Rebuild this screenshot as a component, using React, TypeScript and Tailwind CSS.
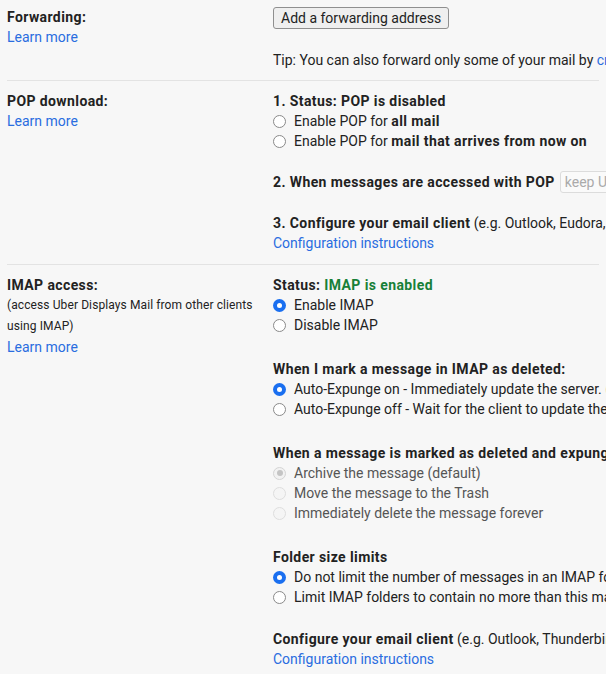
import React from "react";

const font = { fontFamily: "Roboto, 'Liberation Sans', sans-serif" };

function Radio({ checked = false, disabled = false }: { checked?: boolean; disabled?: boolean }) {
  if (checked && !disabled) {
    return (
      <span className="mr-[8px] inline-flex h-[13px] w-[13px] shrink-0 items-center justify-center rounded-full bg-[#1a6ff0]">
        <span className="h-[5px] w-[5px] rounded-full bg-white" />
      </span>
    );
  }
  if (checked && disabled) {
    return (
      <span className="mr-[8px] inline-flex h-[13px] w-[13px] shrink-0 items-center justify-center rounded-full border border-[#d4d4d4] bg-[#f2f2f2]">
        <span className="h-[6px] w-[6px] rounded-full bg-[#c4c4c4]" />
      </span>
    );
  }
  if (disabled) {
    return <span className="mr-[8px] inline-block h-[13px] w-[13px] shrink-0 rounded-full border border-[#dedede] bg-[#f5f5f5]" />;
  }
  return <span className="mr-[8px] inline-block h-[13px] w-[13px] shrink-0 rounded-full border border-[#8a8a8a] bg-white" />;
}

function Opt({ children, checked, disabled }: { children: React.ReactNode; checked?: boolean; disabled?: boolean }) {
  return (
    <div className={"flex h-[20px] items-center " + (disabled ? "text-[#555]" : "")}>
      <Radio checked={checked} disabled={disabled} />
      <span>{children}</span>
    </div>
  );
}

function B({ children }: { children: React.ReactNode }) {
  return <b className="font-bold tracking-[0.4px]">{children}</b>;
}

const link = "text-[#2a6de0]";
const bold = "font-bold tracking-[0.4px]";

export default function App() {
  return (
    <div className="min-h-[674px] w-[606px] overflow-hidden bg-[#f7f7f7] text-[14px] leading-[20px] text-[#222]" style={font}>
      {/* Forwarding */}
      <div className="mx-[7px] grid grid-cols-[266px_1fr] border-b border-[#e3e3e3] pt-[7px] pb-[10px]">
        <div>
          <div className={bold}>Forwarding:</div>
          <div className={link}>Learn more</div>
        </div>
        <div className="whitespace-nowrap">
          <button className="h-[22px] rounded-[3px] border border-[#8f8f8f] bg-[#efefef] px-[7px] text-[14px] leading-[20px] text-[#222]">
            Add a forwarding address
          </button>
          <div className="mt-[21px]">
            Tip: You can also forward only some of your mail by <span className={link}>creating a filter!</span>
          </div>
        </div>
      </div>

      {/* POP */}
      <div className="mx-[7px] grid grid-cols-[266px_1fr] border-b border-[#e3e3e3] pt-[10px] pb-[11px]">
        <div>
          <div className={bold}>POP download:</div>
          <div className={link}>Learn more</div>
        </div>
        <div className="whitespace-nowrap">
          <div className={bold}>1. Status: POP is disabled</div>
          <Opt>
            Enable POP for <B>all mail</B>
          </Opt>
          <Opt>
            Enable POP for <B>mail that arrives from now on</B>
          </Opt>
          <div className="mt-[21px] flex h-[20px] items-center">
            <B>2. When messages are accessed with POP</B>
            <span className="ml-[5px] inline-flex h-[22px] items-center rounded-[3px] border border-[#dcdcdc] bg-[#fafafa] px-[4px] text-[#aaa]">
              keep Uber Displays Mail's copy in the Inbox
            </span>
          </div>
          <div className="mt-[21px]">
            <B>3. Configure your email client</B> (e.g. Outlook, Eudora, Netscape Mail)
          </div>
          <div className={link}>Configuration instructions</div>
        </div>
      </div>

      {/* IMAP */}
      <div className="mx-[7px] grid grid-cols-[266px_1fr] pt-[10px] pb-[10px]">
        <div>
          <div className={bold}>IMAP access:</div>
          <div className="text-[12px] leading-[21px] tracking-[0.1px]">
            (access Uber Displays Mail from other clients using IMAP)
          </div>
          <div className={link}>Learn more</div>
        </div>
        <div className="whitespace-nowrap">
          <div className={bold}>
            Status: <span className="text-[#188038]">IMAP is enabled</span>
          </div>
          <Opt checked>Enable IMAP</Opt>
          <Opt>Disable IMAP</Opt>

          <div className={"mt-[24px] " + bold}>When I mark a message in IMAP as deleted:</div>
          <Opt checked>Auto-Expunge on - Immediately update the server. (default)</Opt>
          <Opt>Auto-Expunge off - Wait for the client to update the server.</Opt>

          <div className={"mt-[24px] " + bold}>When a message is marked as deleted and expunged from the last visible IMAP folder:</div>
          <Opt checked disabled>Archive the message (default)</Opt>
          <Opt disabled>Move the message to the Trash</Opt>
          <Opt disabled>Immediately delete the message forever</Opt>

          <div className={"mt-[24px] " + bold}>Folder size limits</div>
          <Opt checked>Do not limit the number of messages in an IMAP folder (default)</Opt>
          <Opt>Limit IMAP folders to contain no more than this many messages</Opt>

          <div className="mt-[22px]">
            <B>Configure your email client</B> (e.g. Outlook, Thunderbird, iPhone)
          </div>
          <div className={link}>Configuration instructions</div>
        </div>
      </div>
    </div>
  );
}
